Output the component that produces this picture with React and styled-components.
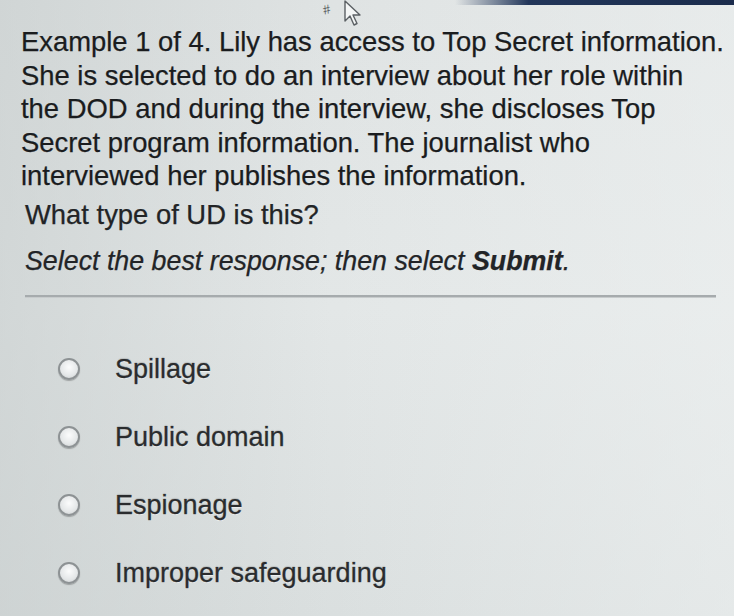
import styled, { createGlobalStyle } from "styled-components";

const GlobalStyle = createGlobalStyle`
    html, body {
        margin: 0;
        padding: 0;
        height: 100%;
    }
    body {
        background: #dde1e1;
        font-family: "Liberation Sans", Arial, sans-serif;
    }
`

const Page = styled.div`
    position: relative;
    width: 734px;
    height: 616px;
    overflow: hidden;
    box-sizing: border-box;
    background:
        linear-gradient(90deg, rgba(196, 202, 202, 0.55) 0%, rgba(220, 224, 224, 0) 45%, rgba(240, 243, 243, 0.5) 100%),
        linear-gradient(180deg, #dfe3e3 0%, #e3e7e7 50%, #dadfdf 100%);
    color: #1f2123;
`

const ScreenEdge = styled.div`
    height: 5px;
    background: linear-gradient(90deg, rgba(30, 48, 80, 0) 0%, rgba(30, 48, 80, 0) 62%, #22365a 72%, #1b2c4c 100%);
`

const Content = styled.div`
    padding: 20px 0 0 21px;
    display: flex;
    flex-direction: column;
    -webkit-text-stroke: 0.25px currentColor;
`

const Scenario = styled.p`
    margin: 0;
    font-size: 27.4px;
    line-height: 33.5px;
    white-space: nowrap;
    color: #1a1c1e;
`

const Question = styled.p`
    margin: 5px 0 0 4px;
    font-size: 27.4px;
    line-height: 33.5px;
    color: #222426;
`

const Instruction = styled.p`
    margin: 14px 0 0 4px;
    font-size: 26.8px;
    line-height: 33.5px;
    font-style: italic;
    color: #222427;
    b {
        font-weight: bold;
    }
`

const Rule = styled.div`
    margin: 16px 18px 0 4px;
    height: 2px;
    background: #a6abad;
    border-bottom: 1px solid #c7cbcc;
`

const Options = styled.div`
    display: flex;
    flex-direction: column;
    gap: 35px;
    margin-top: 55px;
    padding-left: 37px;
`

const Option = styled.label`
    display: flex;
    align-items: center;
    gap: 35px;
    height: 33px;
    font-size: 27px;
    color: #2a2c2e;
    text-shadow: 0 1px 0 rgba(255, 255, 255, 0.5), 0 -1px 1px rgba(0, 0, 0, 0.15);
`

const Radio = styled.span`
    width: 18px;
    height: 18px;
    border-radius: 50%;
    border: 2px solid #8d9294;
    background: radial-gradient(circle at 50% 40%, #fbfcfc 0%, #e4e7e8 60%, #c8cccd 100%);
    box-shadow: 0 1px 1px rgba(0, 0, 0, 0.25);
    flex-shrink: 0;
`

const Cursor = styled.svg`
    position: absolute;
    left: 343px;
    top: 0px;
`

const Smudge = styled.span`
    position: absolute;
    left: 323px;
    top: 2px;
    font-size: 13px;
    color: #55595b;
    transform: rotate(-15deg);
`

const answers = ["Spillage", "Public domain", "Espionage", "Improper safeguarding"];

function App() {
    return (
        <Page>
            <GlobalStyle />
            <ScreenEdge />
            <Smudge>#</Smudge>
            <Cursor width="22" height="28" viewBox="0 0 22 28">
                <path d="M2 1 L2 21 L7 16 L11 25 L14 23.5 L10 15 L17 15 Z"
                      fill="#f4f6f6" stroke="#5b6064" strokeWidth="1.4" strokeLinejoin="round" />
            </Cursor>
            <Content>
                <Scenario>
                    Example 1 of 4. Lily has access to Top Secret information.<br />
                    She is selected to do an interview about her role within<br />
                    the DOD and during the interview, she discloses Top<br />
                    Secret program information. The journalist who<br />
                    interviewed her publishes the information.
                </Scenario>
                <Question>What type of UD is this?</Question>
                <Instruction>Select the best response; then select <b>Submit</b>.</Instruction>
                <Rule />
                <Options>
                    { answers.map((answer, index) => (
                        <Option key={index}>
                            <Radio />
                            {answer}
                        </Option>
                    ))}
                </Options>
            </Content>
        </Page>
    )
}

export default App;
